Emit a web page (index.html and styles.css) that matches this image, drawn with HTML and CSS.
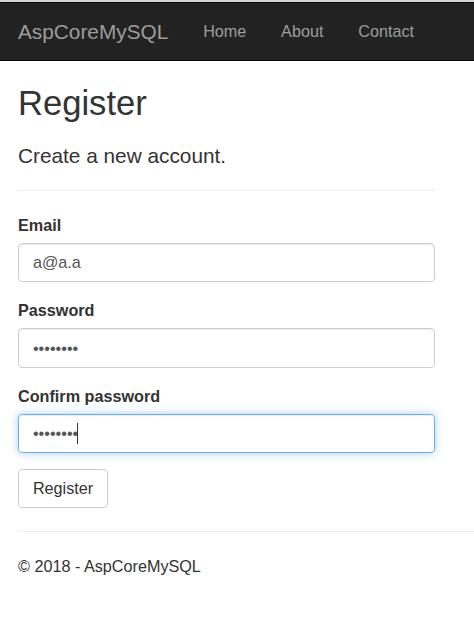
FILE: index.html
```html
<!DOCTYPE html>
<html lang="en">
<head>
<meta charset="utf-8">
<title>Register - AspCoreMySQL</title>
<link rel="stylesheet" href="styles.css">
</head>
<body>
<div class="topline"></div>
<nav class="navbar">
  <a class="brand" href="#">AspCoreMySQL</a>
  <ul class="nav">
    <li><a href="#">Home</a></li>
    <li><a href="#">About</a></li>
    <li><a href="#">Contact</a></li>
  </ul>
</nav>
<main class="container">
  <h2 class="title">Register</h2>
  <form class="form-col">
    <h4 class="subtitle">Create a new account.</h4>
    <hr class="rule">
    <div class="form-group">
      <label class="label" for="email">Email</label>
      <input class="form-control" id="email" type="email" value="a@a.a">
    </div>
    <div class="form-group">
      <label class="label" for="pw">Password</label>
      <input class="form-control" id="pw" type="password" value="aaaaaaaa">
    </div>
    <div class="form-group">
      <label class="label" for="cpw">Confirm password</label>
      <div class="field-wrap">
        <input class="form-control focused" id="cpw" type="password" value="aaaaaaaa">
        <span class="caret"></span>
      </div>
    </div>
    <button type="button" class="btn">Register</button>
  </form>
  <hr class="rule">
  <footer class="footer">
    <p>&copy; 2018 - AspCoreMySQL</p>
  </footer>
</main>
</body>
</html>
```
FILE: styles.css
```css
html, body {
  margin: 0;
  padding: 0;
  background: #fff;
}
body {
  font-family: "Liberation Sans", Arial, Helvetica, sans-serif;
  font-size: 16.2px;
  line-height: 23.1px;
  color: #333;
  overflow: hidden;
}
.topline {
  height: 2px;
  background: #d4d4d4;
}
.navbar {
  display: flex;
  align-items: center;
  box-sizing: border-box;
  height: 59px;
  background: #222;
  border-top: 1px solid #080808;
  border-bottom: 1px solid #080808;
  padding-left: 18px;
}
.brand {
  font-size: 20.8px;
  line-height: 23px;
  color: #9d9d9d;
  text-decoration: none;
  padding-right: 17.5px;
}
.nav {
  display: flex;
  list-style: none;
  margin: 0;
  padding: 0;
}
.nav a {
  display: block;
  padding: 0 17.4px;
  color: #9d9d9d;
  text-decoration: none;
  font-size: 16.2px;
}
.container {
  padding-left: 18px;
}
.title {
  margin: 23px 0 0;
  font-size: 34.6px;
  line-height: 38px;
  font-weight: 500;
  color: #333;
}
.form-col {
  width: 417px;
}
.subtitle {
  margin: 22px 0 0;
  font-size: 20.8px;
  line-height: 23px;
  font-weight: 500;
}
.rule {
  margin: 23px 0;
  border: 0;
  border-top: 1px solid #eee;
  height: 0;
}
.form-group {
  margin-bottom: 17.3px;
}
.label {
  display: block;
  font-weight: bold;
  margin-bottom: 5.8px;
}
.form-control {
  display: block;
  width: 100%;
  box-sizing: border-box;
  height: 39.3px;
  padding: 6.9px 13.9px;
  font-family: inherit;
  font-size: 16.2px;
  line-height: 23.1px;
  color: #555;
  background: #fff;
  border: 1px solid #ccc;
  border-radius: 4.6px;
  box-shadow: inset 0 1px 1px rgba(0,0,0,.075);
  outline: none;
  margin: 0;
}
.form-control.focused {
  border-color: #66afe9;
  box-shadow: inset 0 1px 1px rgba(0,0,0,.075), 0 0 8px rgba(102,175,233,.6);
}
.field-wrap {
  position: relative;
}
.caret {
  position: absolute;
  left: 59px;
  top: 9px;
  width: 1px;
  height: 21px;
  background: #333;
}
.btn {
  display: block;
  margin-top: -1.5px;
  height: 39.3px;
  padding: 6.9px 13.9px;
  font-family: inherit;
  font-size: 16.2px;
  line-height: 23.1px;
  color: #333;
  background: #fff;
  border: 1px solid #ccc;
  border-radius: 4.6px;
  box-sizing: border-box;
}
.footer p {
  margin: 0;
}
```
